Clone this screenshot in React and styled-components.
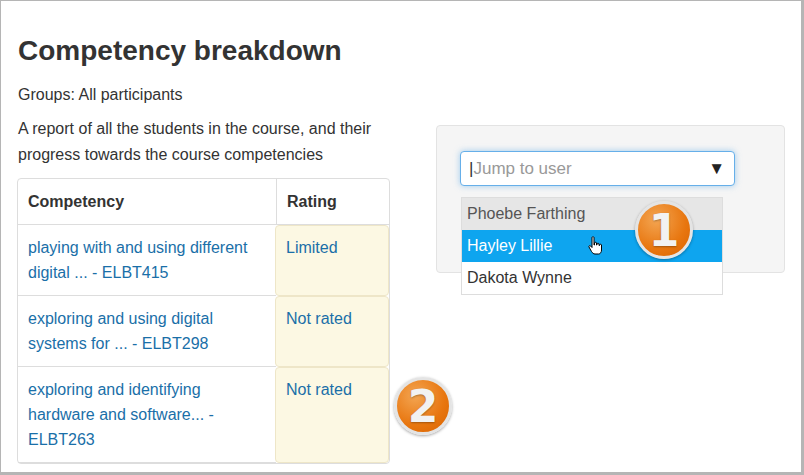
import React from "react";
import styled, { createGlobalStyle } from "styled-components";

const Global = createGlobalStyle`
  html, body { margin: 0; padding: 0; background: #fff; }
  body { font-family: "Liberation Sans", Arial, sans-serif; color: #333; font-size: 16px; }
`;

const Frame = styled.div`
  position: relative;
  width: 804px; height: 475px; box-sizing: border-box;
  border: 1px solid #b5b5b5; border-right: 3px solid #b5b5b5; border-bottom: 3px solid #b5b5b5;
  overflow: hidden;
  display: flex; gap: 46px; padding: 0 0 0 16px;
`;
const Left = styled.div` width: 373px; flex: none; `;
const Title = styled.h2`
  margin: 32px 0 0 1px; font-size: 28px; font-weight: bold; line-height: 36px;
`;
const Para = styled.p` margin: ${p => p.$mt}px 0 0 1px; line-height: 26px; `;
const Table = styled.div`
  margin-top: 10px; border: 1px solid #ddd; border-radius: 4px;
  display: grid; grid-template-columns: 258px 1fr;
`;
const Th = styled.div`
  font-weight: bold; padding: 12px 10px; line-height: 21px;
  border-bottom: 1px solid #ddd;
  ${p => p.$last && "border-left: 1px solid #ddd;"}
`;
const Td = styled.div`
  padding: 10px 10px; min-height: 50px; line-height: 25px; border-bottom: 1px solid #ddd;
`;
const Rate = styled.div`
  background: #fcf8e3; border: 1px solid #eee6c8; border-radius: 4px;
  padding: 9px 10px; line-height: 25px; margin-left: -1px;
`;
const Link = styled.span` color: #1a6fa8; `;
const Panel = styled.div`
  margin-top: 124px; width: 349px; height: 148px; box-sizing: border-box; flex: none;
  background: #f5f5f5; border: 1px solid #e3e3e3; border-radius: 4px;
  padding: 25px 0 0 23px; position: relative;
`;
const Select = styled.div`
  width: 275px; height: 35px; box-sizing: border-box; background: #fff;
  border: 1px solid #66afe9; border-radius: 4px; box-shadow: 0 0 6px rgba(102,175,233,.6);
  display: flex; align-items: center; justify-content: space-between; padding: 0 9px 0 8px;
  font-size: 17px; color: #999;
`;
const Caret = styled.span` color: #222; font-size: 17px; `;
const Menu = styled.div`
  position: absolute; left: 24px; top: 71px; width: 260px; background: #fff;
  border: 1px solid #ddd;
`;
const Item = styled.div`
  height: 32px; line-height: 32px; padding: 0 5px; font-size: 16px;
  background: ${p => p.$bg || "#fff"}; color: ${p => p.$c || "#333"};
  display: flex; align-items: center; gap: 36px;
`;
const Badge = styled.div`
  position: absolute; left: ${p => p.$x}px; top: ${p => p.$y}px;
  width: 58px; height: 58px; border-radius: 50%;
  background: radial-gradient(circle at 35% 30%, #f3a552, #e8760f 60%, #d86200);
  border: 3px solid #e4e4e4; box-sizing: border-box; box-shadow: 0 1px 3px rgba(0,0,0,.35);
  display: flex; align-items: center; justify-content: center;
  color: #f2f2f2; font-size: 44px; font-weight: bold; font-family: "DejaVu Sans", sans-serif;
  text-shadow: 0 1px 2px rgba(0,0,0,.3);
`;

const rows = [
  ["playing with and using different digital ... - ELBT415", "Limited"],
  ["exploring and using digital systems for ... - ELBT298", "Not rated"],
  ["exploring and identifying hardware and software... - ELBT263", "Not rated"],
];

export default function App() {
  return (
    <Frame>
      <Global />
      <Left>
        <Title>Competency breakdown</Title>
        <Para $mt={13}>Groups: All participants</Para>
        <Para $mt={8}>A report of all the students in the course, and their progress towards the course competencies</Para>
        <Table>
          <Th>Competency</Th><Th $last>Rating</Th>
          {rows.map(([a, b]) => (
            <React.Fragment key={a}>
              <Td><Link>{a}</Link></Td>
              <Rate><Link>{b}</Link></Rate>
            </React.Fragment>
          ))}
        </Table>
      </Left>
      <Panel>
        <Select><span><span style={{ color: "#333" }}>|</span>Jump to user</span><Caret>▼</Caret></Select>
        <Menu>
          <Item $bg="#e6e6e6" $c="#555">Phoebe Farthing</Item>
          <Item $bg="#0ea5ef" $c="#fff">Hayley Lillie
            <svg width="16" height="20" viewBox="0 0 16 20"><path d="M4 1.5c0-1 2-1 2 0V9h.5V7c0-1 2-1 2 0v2h.5V8c0-1 2-1 2 0v1.5h.5V9c0-1 2-1 2 0v5c0 2-1 4-3 4H7c-1.5 0-2.5-1-3.5-2.5L1 11c-.5-1 .8-2 1.7-1L4 11.5z" fill="#fff" stroke="#000" strokeWidth="1"/></svg>
          </Item>
          <Item>Dakota Wynne</Item>
        </Menu>
      </Panel>
      <Badge $x={634} $y={200}>1</Badge>
      <Badge $x={393} $y={376}>2</Badge>
    </Frame>
  );
}
